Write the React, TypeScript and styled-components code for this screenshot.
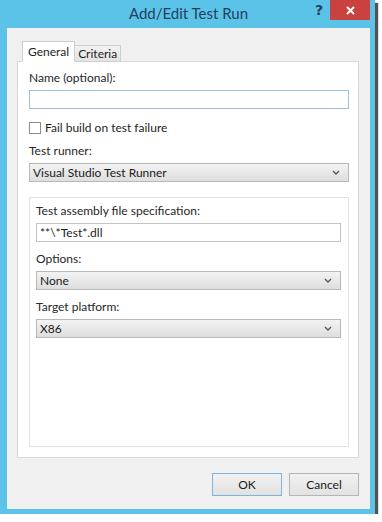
import React from 'react';
import styled, { createGlobalStyle } from 'styled-components';

const GlobalStyle = createGlobalStyle`
  html, body {
    margin: 0;
    padding: 0;
    background: #ffffff;
  }
  body {
    font-family: Lato, 'Noto Sans', sans-serif;
    font-size: 12px;
    color: #1e1e1e;
  }
`;

const COLORS = {
  FRAME: '#5cc3e8',
  CLIENT: '#f0f0f0',
  TITLE: '#23405f',
  CLOSE: '#c94240',
  LINE: '#d9d9d9',
};

const Window = styled.div`
  display: flex;
  flex-direction: column;
  width: 375px;
  height: 514px;
  box-sizing: border-box;
  padding: 0 5px 5px 7px;
  background: ${COLORS.FRAME};
  box-shadow: 3px 3px 1px rgba(40, 40, 40, 0.8);
`;

const TitleBar = styled.div`
  display: flex;
  align-items: flex-start;
  height: 28px;
  flex-shrink: 0;
`;

const Title = styled.div`
  flex: 1;
  padding-left: 58px;
  text-align: center;
  line-height: 27px;
  font-size: 15px;
  color: ${COLORS.TITLE};
`;

const HelpButton = styled.div`
  width: 14px;
  line-height: 20px;
  text-align: center;
  font-family: 'DejaVu Sans', sans-serif;
  font-weight: bold;
  font-size: 14px;
  color: ${COLORS.TITLE};
`;

const CloseButton = styled.div`
  display: flex;
  align-items: center;
  justify-content: center;
  width: 40px;
  height: 20px;
  margin-left: 4px;
  background: ${COLORS.CLOSE};
`;

const Client = styled.div`
  flex: 1;
  display: flex;
  flex-direction: column;
  background: ${COLORS.CLIENT};
  padding: 14px 11px 0 10px;
`;

const TabStrip = styled.div`
  display: flex;
  align-items: flex-end;
  padding-left: 5px;
  height: 20px;
  margin-bottom: -1px;
  position: relative;
  z-index: 1;
`;

const Tab = styled.div<{ $active?: boolean }>`
  box-sizing: border-box;
  height: ${(p) => (p.$active ? '21px' : '17px')};
  padding: 0 ${(p) => (p.$active ? '5px' : '3px')};
  line-height: ${(p) => (p.$active ? '19px' : '16px')};
  border: 1px solid #cfcfcf;
  border-bottom: ${(p) => (p.$active ? '1px solid #ffffff' : '1px solid #cfcfcf')};
  background: ${(p) => (p.$active ? '#ffffff' : 'linear-gradient(#f2f2f2, #e3e3e3)')};
  margin-left: ${(p) => (p.$active ? '0' : '-1px')};
  color: #1e1e1e;
`;

const Panel = styled.div`
  flex: 1;
  display: flex;
  flex-direction: column;
  background: #ffffff;
  border: 1px solid ${COLORS.LINE};
  padding: 8px 9px 10px 11px;
`;

const Label = styled.div<{ $gap?: number }>`
  line-height: 16px;
  margin-top: ${(p) => p.$gap ?? 0}px;
  margin-bottom: 4px;
  color: #262626;
`;

const TextInput = styled.div<{ $focused?: boolean }>`
  box-sizing: border-box;
  height: 19px;
  padding: 0 3px;
  line-height: 17px;
  background: #ffffff;
  border: 1px solid ${(p) => (p.$focused ? '#9cc0e0' : '#c4c4c4')};
`;

const CheckRow = styled.label`
  display: flex;
  align-items: center;
  gap: 4px;
  margin-top: 11px;
  line-height: 16px;
`;

const CheckBox = styled.span`
  box-sizing: border-box;
  width: 12px;
  height: 12px;
  border: 1px solid #8c8c8c;
  background: #ffffff;
`;

const Select = styled.div`
  box-sizing: border-box;
  display: flex;
  align-items: center;
  justify-content: space-between;
  height: 19px;
  padding: 0 8px 0 3px;
  border: 1px solid #b8b8b8;
  background: linear-gradient(#f3f3f3, #dedede);
  color: #1a1a1a;
`;

const GroupBox = styled.div`
  flex: 1;
  margin-top: 15px;
  border: 1px solid #e3e3e3;
  padding: 5px 7px 0 6px;
`;

const Footer = styled.div`
  display: flex;
  justify-content: flex-end;
  gap: 7px;
  padding: 15px 0 13px;
`;

const Button = styled.div<{ $default?: boolean }>`
  box-sizing: border-box;
  width: 70px;
  height: 23px;
  line-height: 21px;
  text-align: center;
  border: 1px solid ${(p) => (p.$default ? '#7eb4dd' : '#b5b5b5')};
  background: linear-gradient(#f1f1f1, #e2e2e2);
  color: #1a1a1a;
`;

const Chevron = () => (
  <svg width="8" height="5" viewBox="0 0 8 5">
    <path d="M1 1 L4 4 L7 1" fill="none" stroke="#555" strokeWidth="1.4" />
  </svg>
);

const DropDown: React.FC<{ value: string }> = ({ value }) => (
  <Select>
    <span>{value}</span>
    <Chevron />
  </Select>
);

const App: React.FC = () => (
  <>
    <GlobalStyle />
    <Window>
      <TitleBar>
        <Title>Add/Edit Test Run</Title>
        <HelpButton>?</HelpButton>
        <CloseButton>
          <svg width="9" height="9" viewBox="0 0 9 9">
            <path d="M1 1 L8 8 M8 1 L1 8" stroke="#ffffff" strokeWidth="2" />
          </svg>
        </CloseButton>
      </TitleBar>
      <Client>
        <TabStrip>
          <Tab $active>General</Tab>
          <Tab>Criteria</Tab>
        </TabStrip>
        <Panel>
          <Label>Name (optional):</Label>
          <TextInput $focused />
          <CheckRow>
            <CheckBox />
            Fail build on test failure
          </CheckRow>
          <Label $gap={7}>Test runner:</Label>
          <DropDown value='Visual Studio Test Runner' />
          <GroupBox>
            <Label>Test assembly file specification:</Label>
            <TextInput>**\*Test*.dll</TextInput>
            <Label $gap={9}>Options:</Label>
            <DropDown value='None' />
            <Label $gap={9}>Target platform:</Label>
            <DropDown value='X86' />
          </GroupBox>
        </Panel>
        <Footer>
          <Button $default>OK</Button>
          <Button>Cancel</Button>
        </Footer>
      </Client>
    </Window>
  </>
);

export default App;
